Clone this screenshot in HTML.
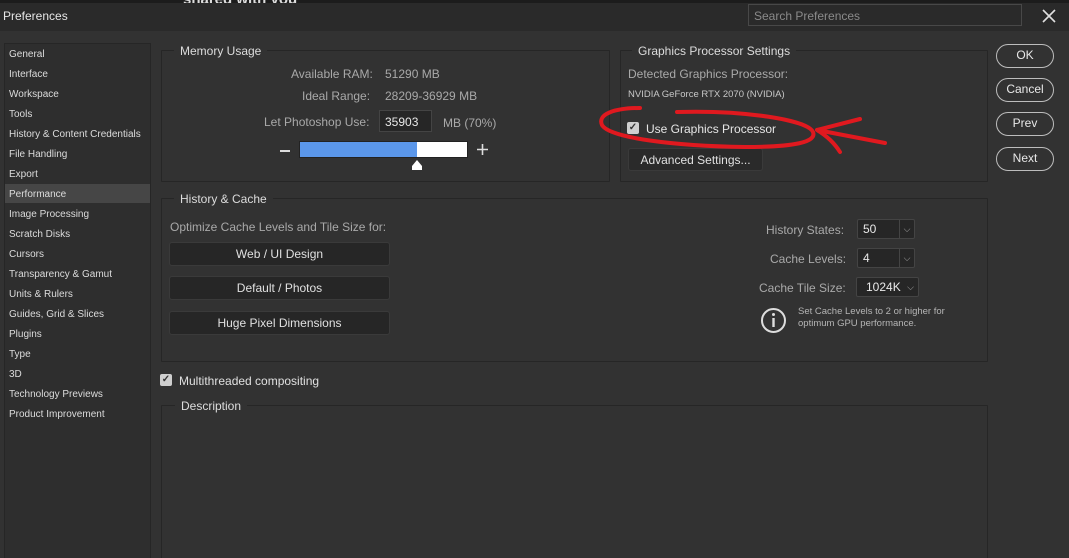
<!DOCTYPE html>
<html><head><style>
*{margin:0;padding:0;box-sizing:border-box}
html,body{width:1069px;height:558px;overflow:hidden}
body{background:#323232;font-family:"Liberation Sans",sans-serif;color:#d6d6d6;position:relative}
.a{position:absolute;white-space:nowrap}
.top{left:0;top:0;width:1069px;height:4px;background:#1c1c1c}
.title{left:0;top:3px;width:1069px;height:28px;background:#2a2a2a}
.side{left:4px;top:43px;width:147px;height:520px;background:#2e2e2e;border:1px solid #262626}
.side div{position:absolute;left:4px;font-size:10px;color:#dcdcdc}
.grp{border:1px solid #262626;border-radius:1px}
.lg{background:#323232;padding:0 6px;font-size:12px;color:#dcdcdc}
.lbl{font-size:12px;color:#a9a9a9}
.btn{background:#262626;border:1px solid #3a3a3a;border-radius:3px;font-size:12px;color:#e0e0e0;text-align:center}
.pill{left:996px;width:58px;height:24px;border:1.5px solid #bdbdbd;border-radius:12px;font-size:12px;color:#e8e8e8;text-align:center;line-height:21px}
.sel{height:20px;background:#262626;border:1px solid #444;border-radius:2px;font-size:12px;color:#e8e8e8;padding-left:5px;line-height:18px}
.sel i{position:absolute;right:0;top:0;width:15px;height:18px;border-left:1px solid #444;font-style:normal;font-size:9px;text-align:center;color:#aaa}
.cb{width:12px;height:12px;background:#cfcfcf;border-radius:2px;color:#333;font-size:10px;line-height:12px;text-align:center;font-weight:bold}
</style></head><body>
<div class="a top"></div>
<div class="a" style="left:183px;top:-9px;font-size:15px;color:#ddd;font-weight:bold">shared with you</div>
<div class="a title"></div>
<div class="a" style="left:3px;top:9px;font-size:12px;color:#e6e6e6">Preferences</div>
<div class="a" style="left:748px;top:4px;width:274px;height:22px;border:1px solid #484848;background:#2a2a2a;font-size:12px;color:#8a8a8a;padding:4px 5px">Search Preferences</div>
<svg class="a" style="left:1042px;top:9px" width="14" height="14"><path d="M1 1L13 13M13 1L1 13" stroke="#e0e0e0" stroke-width="1.6"/></svg>

<div class="a side">
<div style="top:5px">General</div><div style="top:25px">Interface</div><div style="top:45px">Workspace</div><div style="top:65px">Tools</div><div style="top:85px">History &amp; Content Credentials</div><div style="top:105px">File Handling</div><div style="top:125px">Export</div>
<div style="top:140px;left:0;width:145px;height:19px;background:#464646"></div>
<div style="top:145px">Performance</div><div style="top:165px">Image Processing</div><div style="top:185px">Scratch Disks</div><div style="top:205px">Cursors</div><div style="top:225px">Transparency &amp; Gamut</div><div style="top:245px">Units &amp; Rulers</div><div style="top:265px">Guides, Grid &amp; Slices</div><div style="top:285px">Plugins</div><div style="top:305px">Type</div><div style="top:325px">3D</div><div style="top:345px">Technology Previews</div><div style="top:365px">Product Improvement</div>
</div>

<div class="a grp" style="left:161px;top:50px;width:449px;height:132px"></div>
<div class="a lg" style="left:174px;top:44px">Memory Usage</div>
<div class="a lbl" style="left:291px;top:67px">Available RAM:</div>
<div class="a lbl" style="left:385px;top:67px">51290 MB</div>
<div class="a lbl" style="left:302px;top:89px">Ideal Range:</div>
<div class="a lbl" style="left:385px;top:89px">28209-36929 MB</div>
<div class="a lbl" style="left:264px;top:115px">Let Photoshop Use:</div>
<div class="a" style="left:379px;top:110px;width:53px;height:22px;background:#262626;border:1px solid #444;font-size:12px;color:#e8e8e8;padding:4px 5px">35903</div>
<div class="a lbl" style="left:443px;top:116px">MB (70%)</div>
<div class="a" style="left:280px;top:150px;width:10px;height:2px;background:#ddd"></div>
<div class="a" style="left:299px;top:141px;width:169px;height:17px;background:#fff;border:1px solid #222"></div>
<div class="a" style="left:300px;top:142px;width:117px;height:15px;background:#5b97ea"></div>
<svg class="a" style="left:477px;top:144px" width="11" height="11"><path d="M5.5 0V11M0 5.5H11" stroke="#ddd" stroke-width="1.6"/></svg>
<svg class="a" style="left:411px;top:160px" width="12" height="11"><path d="M6 0L11 6V10H1V6Z" fill="#fff"/></svg>

<div class="a grp" style="left:620px;top:50px;width:368px;height:132px"></div>
<div class="a lg" style="left:632px;top:44px">Graphics Processor Settings</div>
<div class="a lbl" style="left:628px;top:67px">Detected Graphics Processor:</div>
<div class="a" style="left:628px;top:89px;font-size:9.5px;color:#c8c8c8">NVIDIA GeForce RTX 2070 (NVIDIA)</div>
<div class="a cb" style="left:627px;top:122px">✓</div>
<div class="a" style="left:646px;top:122px;font-size:12px;color:#e6e6e6">Use Graphics Processor</div>
<div class="a btn" style="left:628px;top:148px;width:135px;height:23px;line-height:22px;background:#2a2a2a">Advanced Settings...</div>
<svg class="a" style="left:595px;top:100px" width="300" height="60"><path d="M45 8C20 8 2 14 7 25C14 38 80 46 150 47C200 47 222 42 218 32C213 20 150 10 82 12" fill="none" stroke="#e0191f" stroke-width="4" stroke-linecap="round"/><path d="M265 19L222 30L290 43M222 30C232 36 240 44 245 52" fill="none" stroke="#e0191f" stroke-width="4" stroke-linecap="round" stroke-linejoin="round"/></svg>

<div class="a pill" style="top:44px">OK</div>
<div class="a pill" style="top:78px">Cancel</div>
<div class="a pill" style="top:112px">Prev</div>
<div class="a pill" style="top:147px">Next</div>

<div class="a grp" style="left:161px;top:198px;width:827px;height:164px"></div>
<div class="a lg" style="left:174px;top:192px">History &amp; Cache</div>
<div class="a lbl" style="left:170px;top:220px">Optimize Cache Levels and Tile Size for:</div>
<div class="a btn" style="left:169px;top:242px;width:221px;height:24px;line-height:23px">Web / UI Design</div>
<div class="a btn" style="left:169px;top:276px;width:221px;height:24px;line-height:23px">Default / Photos</div>
<div class="a btn" style="left:169px;top:311px;width:221px;height:24px;line-height:23px">Huge Pixel Dimensions</div>
<div class="a lbl" style="left:766px;top:223px">History States:</div>
<div class="a sel" style="left:857px;top:219px;width:58px">50<i>⌵</i></div>
<div class="a lbl" style="left:770px;top:252px">Cache Levels:</div>
<div class="a sel" style="left:857px;top:248px;width:58px">4<i>⌵</i></div>
<div class="a lbl" style="left:759px;top:281px">Cache Tile Size:</div>
<div class="a sel" style="left:856px;top:277px;width:63px;padding-left:9px">1024K<i style="border:none">⌵</i></div>
<svg class="a" style="left:760px;top:307px" width="27" height="27"><circle cx="13.5" cy="13.5" r="11.5" fill="none" stroke="#ddd" stroke-width="2"/><rect x="12.3" y="11" width="2.4" height="9" fill="#ddd"/><circle cx="13.5" cy="7.5" r="1.5" fill="#ddd"/></svg>
<div class="a" style="left:798px;top:306px;font-size:9.5px;color:#b5b5b5;line-height:12px">Set Cache Levels to 2 or higher for<br>optimum GPU performance.</div>

<div class="a cb" style="left:160px;top:374px">✓</div>
<div class="a" style="left:179px;top:374px;font-size:12px;color:#e0e0e0">Multithreaded compositing</div>

<div class="a grp" style="left:161px;top:405px;width:827px;height:160px"></div>
<div class="a lg" style="left:175px;top:399px">Description</div>
</body></html>
